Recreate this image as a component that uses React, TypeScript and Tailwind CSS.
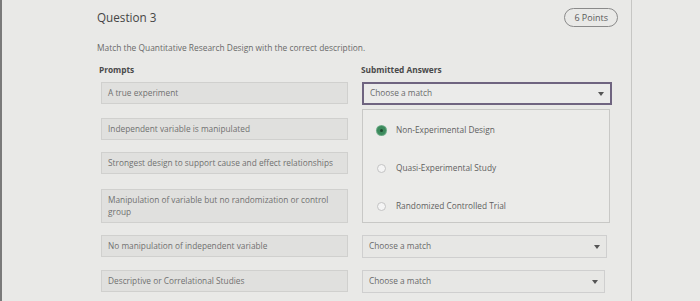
import React from "react";

const font = { fontFamily: '"Open Sans", "Noto Sans", sans-serif' };

function Arrow() {
  return (
    <svg width="6" height="4" viewBox="0 0 6 4" className="shrink-0">
      <path d="M0 0 L6 0 L3 4 Z" fill="#555" />
    </svg>
  );
}

function Select({ active = false, w = "w-[250px]" }: { active?: boolean; w?: string }) {
  return (
    <div
      className={`${w} h-[23px] flex items-center justify-between pl-[6px] pr-[6px] text-[8.3px] text-[#6a6a6a] ${
        active ? "border-2 border-[#6f6480] bg-[#ebebea]" : "border border-[#cfcfcf] bg-[#e7e7e5]"
      }`}
    >
      <span>Choose a match</span>
      <Arrow />
    </div>
  );
}

function Prompt({ children, h = "h-[22px]" }: { children: React.ReactNode; h?: string }) {
  return (
    <div className={`w-[247px] ${h} border border-[#d0d0ce] bg-[#e0e0de] px-[6px] flex items-center text-[8.3px] leading-[12px] text-[#707070]`}>
      <div>{children}</div>
    </div>
  );
}

function Radio({ checked }: { checked?: boolean }) {
  return checked ? (
    <div className="w-[9px] h-[9px] rounded-full bg-[#3c8a5c] flex items-center justify-center shadow-[0_0_0_1px_#6aa985]">
      <div className="w-[3px] h-[3px] rounded-full bg-[#1f4a31]" />
    </div>
  ) : (
    <div className="w-[9px] h-[9px] rounded-full border border-[#c4c4c4] bg-[#f4f4f4]" />
  );
}

export default function App() {
  return (
    <div style={font} className="w-[700px] h-[301px] overflow-hidden bg-[#e9e9e7] flex">
      <div className="w-[2px] h-full bg-[#7a7a7a]" />
      <div className="w-[630px] h-full border-r border-[#c6c6c4] pl-[95px] pt-[8px] relative">
        <div className="flex items-center justify-between w-[521px]">
          <div className="text-[11.7px] text-[#454545] mt-[1px]">Question 3</div>
          <div className="h-[19px] px-[9px] rounded-full border border-[#8a8a8a] text-[9px] text-[#5a5a5a] flex items-center">
            6 Points
          </div>
        </div>
        <div className="mt-[15px] text-[8.4px] text-[#6a6a6a]">
          Match the Quantitative Research Design with the correct description.
        </div>
        <div className="mt-[9px] flex">
          <div className="w-[264px] pl-[2px] text-[8.3px] font-bold text-[#4a4a4a]">Prompts</div>
          <div className="text-[8.3px] font-bold text-[#4a4a4a]">Submitted Answers</div>
        </div>

        <div className="ml-[4px] mt-[6px] flex flex-col">
          <div className="flex gap-[14px] items-start">
            <Prompt>A true experiment</Prompt>
            <div className="relative">
              <Select active />
              <div className="absolute left-0 top-[27px] w-[248px] h-[114px] border border-[#c8c8c6] bg-[#ebebe9] flex flex-col pl-[14px] pt-[15px] gap-[28px] text-[8.3px] text-[#5f5f5f] z-10">
                <div className="flex items-center gap-[10px] h-[10px]">
                  <Radio checked />
                  <span>Non-Experimental Design</span>
                </div>
                <div className="flex items-center gap-[10px] h-[10px]">
                  <Radio />
                  <span>Quasi-Experimental Study</span>
                </div>
                <div className="flex items-center gap-[10px] h-[10px]">
                  <Radio />
                  <span>Randomized Controlled Trial</span>
                </div>
              </div>
            </div>
          </div>
          <div className="mt-[13px]">
            <Prompt>Independent variable is manipulated</Prompt>
          </div>
          <div className="mt-[12px]">
            <Prompt>Strongest design to support cause and effect relationships</Prompt>
          </div>
          <div className="mt-[15px]">
            <Prompt h="h-[34px]">Manipulation of variable but no randomization or control group</Prompt>
          </div>
          <div className="mt-[12px] flex gap-[14px]">
            <Prompt>No manipulation of independent variable</Prompt>
            <Select w="w-[245px]" />
          </div>
          <div className="mt-[12px] flex gap-[14px]">
            <Prompt>Descriptive or Correlational Studies</Prompt>
            <Select w="w-[243px]" />
          </div>
        </div>
      </div>
      <div className="flex-1" />
    </div>
  );
}
